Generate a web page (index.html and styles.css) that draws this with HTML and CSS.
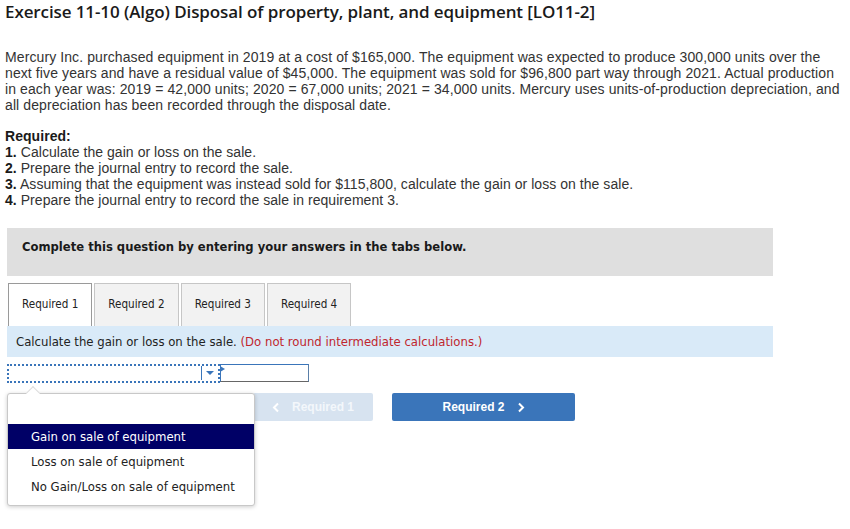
FILE: index.html
```html
<!DOCTYPE html>
<html>
<head>
    <title>Exercise 11-10 (Algo)</title>
    <meta charset="utf-8">
    <link rel="stylesheet" href="styles.css">
</head>
<body>
    <h1>Exercise 11-10 (Algo) Disposal of property, plant, and equipment [LO11-2]</h1>

    <p class="intro">Mercury Inc. purchased equipment in 2019 at a cost of $165,000. The equipment was expected to produce 300,000 units over the<br>
        next five years and have a residual value of $45,000. The equipment was sold for $96,800 part way through 2021. Actual production<br>
        in each year was: 2019 = 42,000 units; 2020 = 67,000 units; 2021 = 34,000 units. Mercury uses units-of-production depreciation, and<br>
        all depreciation has been recorded through the disposal date.</p>

    <div class="required">
        <strong>Required:</strong><br>
        <strong>1.</strong> Calculate the gain or loss on the sale.<br>
        <strong>2.</strong> Prepare the journal entry to record the sale.<br>
        <strong>3.</strong> Assuming that the equipment was instead sold for $115,800, calculate the gain or loss on the sale.<br>
        <strong>4.</strong> Prepare the journal entry to record the sale in requirement 3.
    </div>

    <div class="question">
        <div class="notice">Complete this question by entering your answers in the tabs below.</div>

        <!-- tabs -->
        <div class="tabs">
            <div class="tab active">Required 1</div>
            <div class="tab">Required 2</div>
            <div class="tab">Required 3</div>
            <div class="tab">Required 4</div>
        </div>
        <div class="instruction">Calculate the gain or loss on the sale. <span class="warn">(Do not round intermediate calculations.)</span></div>

        <div class="answer-row">
            <div class="select-box">
                <span class="select-arrow"></span>
            </div>
            <div class="amount-box">
                <span class="focus-mark"></span>
            </div>
        </div>

        <div class="bottom-row">
            <!-- open dropdown list -->
            <div class="dropdown">
                <div class="notch"></div>
                <div class="option blank"></div>
                <div class="option selected">Gain on sale of equipment</div>
                <div class="option">Loss on sale of equipment</div>
                <div class="option">No Gain/Loss on sale of equipment</div>
            </div>
            <div class="nav">
                <div class="btn btn-prev">
                    <svg width="8" height="11" viewBox="0 0 8 11"><path d="M6 1.5 L2 5.5 L6 9.5" fill="none" stroke="#fff" stroke-width="2"/></svg>
                    Required 1
                </div>
                <div class="btn btn-next">
                    Required 2
                    <svg width="8" height="11" viewBox="0 0 8 11"><path d="M2 1.5 L6 5.5 L2 9.5" fill="none" stroke="#fff" stroke-width="2"/></svg>
                </div>
            </div>
        </div>
    </div>
</body>
</html>
```

FILE: styles.css
```css
body {
    margin: 0;
    padding: 0 5px;
    font-family: "Liberation Sans", Arial, sans-serif;
    color: #222;
    background: #fff;
}

h1 {
    font-family: "Open Sans", sans-serif;
    font-size: 17px;
    font-weight: 600;
    line-height: 20px;
    margin: 2px 0 0 0;
    color: #1a1a1a;
    letter-spacing: -0.1px;
}

.intro {
    font-size: 14px;
    line-height: 16px;
    margin: 27px 0 0 0;
    width: 840px;
    color: #333;
    letter-spacing: 0.1px;
}

.required {
    font-size: 14px;
    line-height: 16px;
    margin-top: 15px;
    color: #333;
    letter-spacing: 0.05px;
}

.required strong {
    color: #1a1a1a;
}

.question {
    margin: 20px 0 0 2px;
    width: 766px;
    font-family: "DejaVu Sans Condensed", "DejaVu Sans", sans-serif;
}

.notice {
    background: #dfdfdf;
    height: 48px;
    padding-left: 15px;
    font-size: 12.9px;
    font-weight: bold;
    line-height: 38px;
    color: #1a1a1a;
}

.tabs {
    display: flex;
    gap: 2px;
    margin-top: 7px;
    margin-left: 1px;
}

.tab {
    height: 42px;
    border: 1px solid #c6c6c6;
    border-bottom: none;
    background: #f2f2f2;
    font-size: 11.6px;
    line-height: 40px;
    padding: 0 13px;
    color: #222;
}

.tab.active {
    background: #fff;
    border-color: #9a9a9a;
}

.instruction {
    background: #d9eaf8;
    height: 31px;
    line-height: 31px;
    padding-left: 9px;
    font-size: 13px;
    color: #222;
}

.warn {
    color: #c0262e;
}

.answer-row {
    display: flex;
    margin-top: 7px;
}

.select-box {
    position: relative;
    width: 209px;
    height: 15px;
    border: 2px dotted #3a75ba;
}

.select-arrow {
    position: absolute;
    right: 0;
    top: 0;
    width: 16px;
    height: 14px;
    border-left: 1px solid #3a75ba;
}

.select-arrow::after {
    content: "";
    position: absolute;
    left: 4px;
    top: 5px;
    border-left: 4px solid transparent;
    border-right: 4px solid transparent;
    border-top: 4px solid #3a75ba;
}

.amount-box {
    position: relative;
    width: 87px;
    height: 16px;
    border: 1.5px solid #3a75ba;
    border-right-color: #5a7fa8;
    border-bottom-color: #666;
}

.focus-mark {
    position: absolute;
    left: -1px;
    top: 1px;
    border-top: 3px solid transparent;
    border-bottom: 3px solid transparent;
    border-left: 5px solid #3a75ba;
}

.bottom-row {
    position: relative;
    height: 122px;
    margin-top: 10px;
}

.nav {
    display: flex;
    gap: 19px;
    padding-left: 246px;
}

.btn {
    height: 28px;
    border-radius: 2px;
    display: flex;
    align-items: center;
    justify-content: center;
    gap: 12px;
    font-family: "Liberation Sans", Arial, sans-serif;
    font-weight: bold;
    font-size: 12px;
    color: #fff;
}

.btn-prev {
    width: 120px;
    background: #d7e3f0;
    color: #f3f7fb;
}

.btn-next {
    width: 183px;
    background: #3a75ba;
}

.dropdown {
    position: absolute;
    left: 0;
    top: 0;
    width: 246px;
    background: #fff;
    border: 1px solid #c8c8c8;
    border-radius: 3px;
    box-shadow: 0 1px 4px rgba(0, 0, 0, 0.2);
    padding-bottom: 6px;
    z-index: 2;
    font-family: "DejaVu Sans Condensed", "DejaVu Sans", sans-serif;
    font-size: 13px;
}

.notch {
    position: absolute;
    left: 20px;
    top: -6px;
    width: 9px;
    height: 9px;
    background: #fff;
    border-left: 1px solid #ddd;
    border-top: 1px solid #ddd;
    transform: rotate(45deg);
}

.option {
    height: 25px;
    line-height: 25px;
    padding-left: 23px;
    color: #222;
}

.option.blank {
    height: 30px;
}

.option.selected {
    background: #000066;
    color: #fff;
}
```
